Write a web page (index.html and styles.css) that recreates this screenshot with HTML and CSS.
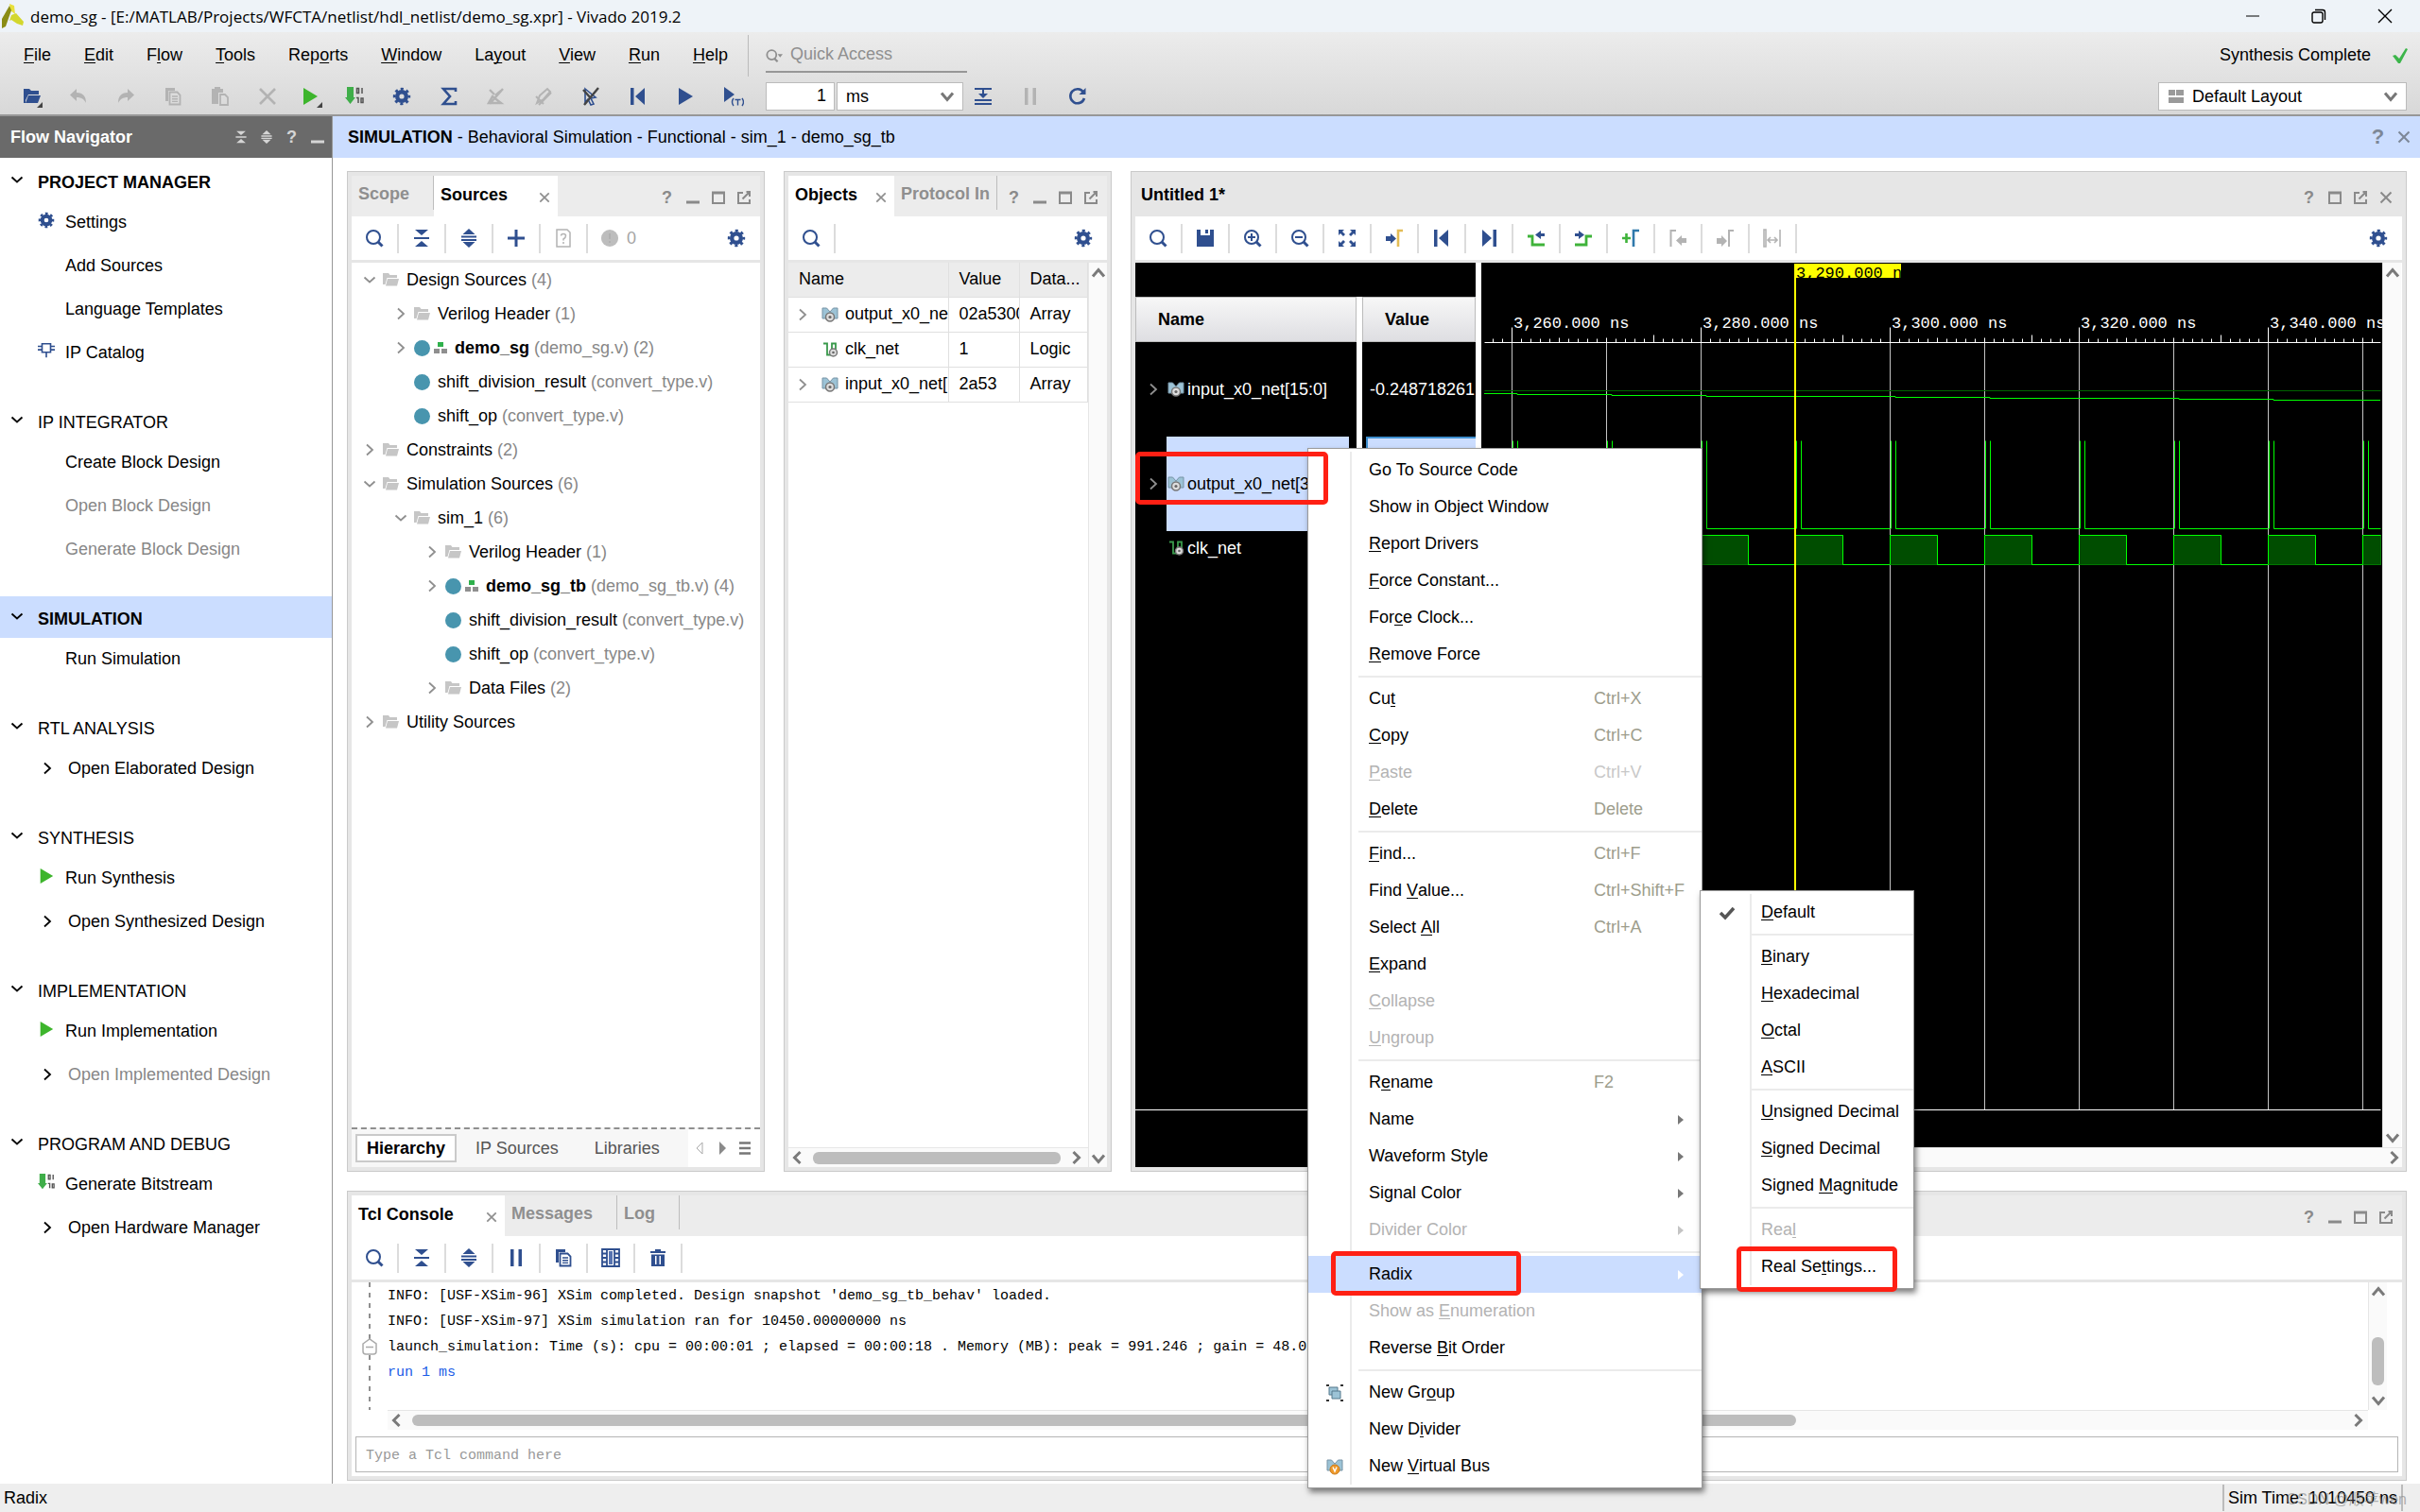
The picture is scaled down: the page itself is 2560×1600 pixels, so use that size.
FILE: index.html
```html
<!DOCTYPE html>
<html lang="en">
  <head>
    <meta charset="UTF-8" />
    <meta name="viewport" content="width=device-width, initial-scale=1.0" />
    <title>demo_sg - Vivado 2019.2</title>
    <link rel="stylesheet" href="styles.css">
  </head>
  <body>
    <svg class="sprite" aria-hidden="true">
      <symbol id="gear" viewBox="0 0 20 20"><g fill="none" stroke="currentColor"><circle cx="10" cy="10" r="4.8" stroke-width="4.4"/><circle cx="10" cy="10" r="7.9" stroke-width="2.6" stroke-dasharray="3.1 3.1" stroke-dashoffset="1.5"/></g></symbol>
      <symbol id="search" viewBox="0 0 20 20"><circle cx="9" cy="9" r="7" fill="none" stroke="currentColor" stroke-width="2"/><path d="M14 14l4.500 4.500" stroke="currentColor" stroke-width="3"/></symbol>
      <symbol id="zoomin" viewBox="0 0 20 20"><circle cx="9" cy="9" r="7" fill="none" stroke="currentColor" stroke-width="2"/><path d="M14 14l4.500 4.500" stroke="currentColor" stroke-width="3"/><path d="M5 9h8M9 5v8" stroke="currentColor" stroke-width="2"/></symbol>
      <symbol id="zoomout" viewBox="0 0 20 20"><circle cx="9" cy="9" r="7" fill="none" stroke="currentColor" stroke-width="2"/><path d="M14 14l4.500 4.500" stroke="currentColor" stroke-width="3"/><path d="M5 9h8" stroke="currentColor" stroke-width="2"/></symbol>
      <symbol id="collapse" viewBox="0 0 20 20"><path d="M3 1h14l-7 6zM3 19h14l-7-6zM2 9h16v2H2z" fill="currentColor"/></symbol>
      <symbol id="expand" viewBox="0 0 20 20"><path d="M3.500 6h13L10 0zM3.500 14h13L10 20zM2 7.500h16v2H2zM2 11h16v2H2z" fill="currentColor"/></symbol>
      <symbol id="plus" viewBox="0 0 20 20"><path d="M10 1v18M1 10h18" stroke="currentColor" stroke-width="3"/></symbol>
      <symbol id="down" viewBox="0 0 14 14"><path d="M1.500 4.500L7 9.500l5.500-5" fill="none" stroke="currentColor" stroke-width="1.800"/></symbol>
      <symbol id="right" viewBox="0 0 14 14"><path d="M4 1.500L10 7l-6 5.500" fill="none" stroke="currentColor" stroke-width="1.800"/></symbol>
      <symbol id="sb-up" viewBox="0 0 16 16"><path d="M2 11.500l6-7 6 7" fill="none" stroke="currentColor" stroke-width="3"/></symbol>
      <symbol id="sb-down" viewBox="0 0 16 16"><path d="M2 4.500l6 7 6-7" fill="none" stroke="currentColor" stroke-width="3"/></symbol>
      <symbol id="sb-left" viewBox="0 0 16 16"><path d="M11.500 2l-6 6 6 6" fill="none" stroke="currentColor" stroke-width="3"/></symbol>
      <symbol id="sb-right" viewBox="0 0 16 16"><path d="M4.500 2l6 6-6 6" fill="none" stroke="currentColor" stroke-width="3"/></symbol>
      <symbol id="close" viewBox="0 0 14 14"><path d="M1.500 1.500l11 11M12.500 1.500l-11 11" stroke="currentColor" stroke-width="2"/></symbol>
      <symbol id="min" viewBox="0 0 14 14"><path d="M0 12h14" stroke="currentColor" stroke-width="3"/></symbol>
      <symbol id="max" viewBox="0 0 14 14"><rect x="1" y="2" width="12" height="11" fill="none" stroke="currentColor" stroke-width="2"/><path d="M0 2h14" stroke="currentColor" stroke-width="3"/></symbol>
      <symbol id="pop" viewBox="0 0 14 14"><path d="M6 2H1v11h12V9M13 6V1H9.500M5.500 8.500L12 2" fill="none" stroke="currentColor" stroke-width="2"/></symbol>
      <symbol id="folder" viewBox="0 0 17 16"><path d="M0 1h6l1.500 2H15v3H4.500L2.500 13H0z" fill="#c6c6c6"/><path d="M5 7h12l-2 7.500H3z" fill="#c6c6c6"/></symbol>
      <symbol id="hier" viewBox="0 0 14 14"><path d="M4 1h6v5H4z" fill="#2fb14c"/><path d="M0 8h6v5H0zM8 8h6v5H8z" fill="#8f8f8f"/></symbol>
      <symbol id="play" viewBox="0 0 20 20"><path d="M3 1l15 9-15 9z" fill="currentColor"/></symbol>
      <symbol id="bits" viewBox="0 0 20 20"><path d="M2 0h7v11h2l-5.500 7L0 11h2z" fill="#3fae49"/><path d="M12.500 1.500h2v5h-2zM18 1v6M12 11.500h2v5.500M17 12h2v4.500h-2z" fill="none" stroke="#555" stroke-width="1.500"/></symbol>
      <symbol id="chip" viewBox="0 0 20 20"><path d="M5 2h10v10H5zM0 5h5M0 9h5M15 5h5M15 9h5M10 12v6" fill="none" stroke="currentColor" stroke-width="1.800"/></symbol>
      <symbol id="bus" viewBox="0 0 18 16"><path d="M1 1h4.500L9 5l3.500-4H17v11H1z" fill="#9cc3d6" stroke="#7793a5"/><circle cx="9" cy="10.500" r="4.500" fill="#ddd" stroke="#777" stroke-width="1.500"/><circle cx="9" cy="10.500" r="1.600" fill="#666"/></symbol>
      <symbol id="wire" viewBox="0 0 18 16"><path d="M2 1.500h4v12h5v-12h4V9" fill="none" stroke="#3a9a4c" stroke-width="1.800"/><circle cx="12.500" cy="11" r="4" fill="#ddd" stroke="#777" stroke-width="1.500"/><circle cx="12.500" cy="11" r="1.300" fill="#666"/></symbol>
      <symbol id="copy" viewBox="0 0 20 20"><path d="M2 1h10v3H5v11H2z" fill="currentColor"/><path d="M6.500 5.500h8l3 3v10h-11z" fill="none" stroke="currentColor" stroke-width="1.800"/><path d="M9 10h6M9 12.700h6M9 15.400h6" stroke="currentColor" stroke-width="1.400"/></symbol>
      <symbol id="first" viewBox="0 0 20 20"><path d="M2 1h3.500v18H2zM17 1v18L7 10z" fill="currentColor"/></symbol>
      <symbol id="last" viewBox="0 0 20 20"><path d="M18 1h-3.500v18H18zM3 1v18l10-9z" fill="currentColor"/></symbol>
      <symbol id="pause" viewBox="0 0 20 20"><path d="M4 1h3.500v18H4zM12.500 1H16v18h-3.500z" fill="currentColor"/></symbol>
      <symbol id="undo" viewBox="0 0 20 20"><path d="M8 2v4c7 0 10 4 10 11-2-4-5-6-10-6v4L1 8.500z" fill="currentColor"/></symbol>
      <symbol id="redo" viewBox="0 0 20 20"><path d="M12 2v4C5 6 2 10 2 17c2-4 5-6 10-6v4l7-6.500z" fill="currentColor"/></symbol>
    </svg>

    <header class="titlebar">
      <svg class="logo" viewBox="0 0 26 26"><path d="M10 0l5 2 1 9-5-4z" fill="#e8e03a"/><path d="M10 2l2 5L6 24l-4 2V16z" fill="#8a8c14"/><path d="M12 12l5-2 8 9-1 4-6-2-6-4-2 1z" fill="#d3d72e"/></svg>
      <h1>demo_sg - [E:/MATLAB/Projects/WFCTA/netlist/hdl_netlist/demo_sg.xpr] - Vivado 2019.2</h1>
      <div class="window-buttons">
        <button aria-label="Minimize"><svg class="i16" viewBox="0 0 16 16"><path d="M1 8h14" stroke="#000"/></svg></button>
        <button aria-label="Restore"><svg class="i16" viewBox="0 0 16 16"><rect x="1" y="4" width="11" height="11" rx="2" fill="none" stroke="#000" stroke-width="1.400"/><path d="M4 1.500h8a2.500 2.500 0 0 1 2.500 2.500v8" fill="none" stroke="#000" stroke-width="1.400"/></svg></button>
        <button aria-label="Close"><svg class="i16" viewBox="0 0 16 16"><path d="M1 1l14 14M15 1L1 15" stroke="#000" stroke-width="1.400"/></svg></button>
      </div>
    </header>

    <div class="header">
      <nav class="menubar">
        <button><u>F</u>ile</button><button><u>E</u>dit</button><button>F<u>l</u>ow</button><button><u>T</u>ools</button><button>Rep<u>o</u>rts</button><button><u>W</u>indow</button><button>La<u>y</u>out</button><button><u>V</u>iew</button><button><u>R</u>un</button><button><u>H</u>elp</button>
        <label class="quick"><svg class="i18" viewBox="0 0 20 20"><circle cx="7" cy="9" r="5.500" fill="none" stroke="#8f8f8f" stroke-width="2"/><path d="M10 13l4 4" stroke="#8f8f8f" stroke-width="2.500"/><path d="M14 8h6l-3 4z" fill="#8f8f8f"/></svg><input type="text" placeholder="Quick Access" aria-label="Quick Access" /></label>
        <div class="status">Synthesis Complete
          <svg class="i18" viewBox="0 0 18 18"><path d="M1 9l3-1 4 4L15 1l2 1-8 15H7z" fill="#3cb54a"/></svg>
        </div>
      </nav>
      <div class="main-tools">
        <button aria-label="Open"><svg class="i24" viewBox="0 0 24 24"><path d="M4 4h6l2 2h8v4H9l-3 6v3H4z" fill="#2f4f8f"/><path d="M9 11h13l-3 8H6z" fill="#2f4f8f"/><path d="M24 18v6h-6z" fill="#444"/></svg></button>
        <button class="off" aria-label="Undo"><svg class="i20"><use href="#undo"/></svg></button>
        <button class="off" aria-label="Redo"><svg class="i20"><use href="#redo"/></svg></button>
        <button class="off" aria-label="Copy"><svg class="i20"><use href="#copy"/></svg></button>
        <button class="off" aria-label="Paste"><svg class="i20" viewBox="0 0 20 20"><path d="M1 2h3V0h6v2h3v4H8v12H1z" fill="currentColor"/><path d="M10 8h5l3 3v8h-8z" fill="none" stroke="currentColor" stroke-width="1.800"/></svg></button>
        <button class="off" aria-label="Delete"><svg class="i20" viewBox="0 0 20 20"><path d="M2 2l16 16M18 2L2 18" stroke="currentColor" stroke-width="2.600"/></svg></button>
        <button class="go" aria-label="Run"><svg class="i24" viewBox="0 0 24 24"><path d="M4 3l15 9-15 9z" fill="#3db52c"/><path d="M24 18v6h-6z" fill="#444"/></svg></button>
        <button aria-label="Generate Bitstream"><svg class="i20"><use href="#bits"/></svg></button>
        <button aria-label="Settings"><svg class="i20"><use href="#gear"/></svg></button>
        <button aria-label="Report"><svg class="i20" viewBox="0 0 20 20"><path d="M17 5V2H4l7 8-7 8h13v-3" fill="none" stroke="currentColor" stroke-width="2.600"/></svg></button>
        <button class="off" aria-label="Timing"><svg class="i20" viewBox="0 0 20 20"><path d="M2 17h13l-9-7zM3 3l5 5M17 2L3 18M9 9l6-5" fill="none" stroke="currentColor" stroke-width="2.400"/></svg></button>
        <button class="off" aria-label="Edit"><svg class="i20" viewBox="0 0 20 20"><path d="M3 17l3-8 8-7 3 3-7 8zM18 6L5 19M2 10l8 8" fill="none" stroke="currentColor" stroke-width="2"/></svg></button>
        <button aria-label="Deselect"><svg class="i20" viewBox="0 0 20 20"><path d="M4 2l11 9-5 1 3 6-3 1-3-6-3 3z" fill="none" stroke="#2f4f8f" stroke-width="1.600"/><path d="M18 1L3 19M2 3l8 9" stroke="#444" stroke-width="2.400"/></svg></button>
        <button aria-label="Restart"><svg class="i20"><use href="#first"/></svg></button>
        <button aria-label="Run All"><svg class="i20"><use href="#play"/></svg></button>
        <button aria-label="Run for"><svg class="i24" viewBox="0 0 24 24"><path d="M3 2l11 8-11 8z" fill="currentColor"/><path d="M13 14q-3 4 0 8M22 14q3 4 0 8M14.500 15.500h6M17.500 15.500v6" fill="none" stroke="currentColor" stroke-width="1.400"/></svg></button>
        <input class="time" type="text" value="1" aria-label="Run time" />
        <div class="select unit"><select aria-label="Time unit"><option>ms</option></select><svg class="i16"><use href="#sb-down"/></svg></div>
        <button class="step" aria-label="Step"><svg class="i20" viewBox="0 0 20 20"><path d="M1 2h18M1 14h18M1 18h18M10 3v5" stroke="currentColor" stroke-width="2"/><path d="M5 7h10l-5 5z" fill="currentColor"/></svg></button>
        <button class="off" aria-label="Break"><svg class="i20"><use href="#pause"/></svg></button>
        <button aria-label="Relaunch"><svg class="i20" viewBox="0 0 20 20"><path d="M16 5.500A7.500 7.500 0 1 0 17 12" fill="none" stroke="currentColor" stroke-width="2.600"/><path d="M18.500 1v7h-7z" fill="currentColor"/></svg></button>
        <div class="select layout"><svg class="i16 grid-icon" viewBox="0 0 16 16"><path d="M0 1h7v6H0zM8 1h8v6H8zM0 9h16v6H0z" fill="#9a9a9a"/></svg><select aria-label="Layout"><option>Default Layout</option></select><svg class="i16"><use href="#sb-down"/></svg></div>
      </div>
    </div>

    <main class="main">
      <aside class="nav">
        <div class="nav-title">
          <h2>Flow Navigator</h2>
          <button aria-label="Collapse all"><svg class="i14"><use href="#collapse"/></svg></button>
          <button aria-label="Expand all"><svg class="i14"><use href="#expand"/></svg></button>
          <button class="help">?</button>
          <button aria-label="Minimize"><svg class="i14"><use href="#min"/></svg></button>
        </div>
        <section>
          <h3 class="bold"><svg class="i14"><use href="#down"/></svg>PROJECT MANAGER</h3>
          <ul>
            <li><svg class="i18 blue"><use href="#gear"/></svg><a href="#">Settings</a></li>
            <li><a href="#">Add Sources</a></li>
            <li><a href="#">Language Templates</a></li>
            <li><svg class="i18 blue"><use href="#chip"/></svg><a href="#">IP Catalog</a></li>
          </ul>
        </section>
        <section>
          <h3><svg class="i14"><use href="#down"/></svg>IP INTEGRATOR</h3>
          <ul>
            <li><a href="#">Create Block Design</a></li>
            <li class="off"><a href="#">Open Block Design</a></li>
            <li class="off"><a href="#">Generate Block Design</a></li>
          </ul>
        </section>
        <section>
          <h3 class="bold selected"><svg class="i14"><use href="#down"/></svg>SIMULATION</h3>
          <ul>
            <li><a href="#">Run Simulation</a></li>
          </ul>
        </section>
        <section>
          <h3><svg class="i14"><use href="#down"/></svg>RTL ANALYSIS</h3>
          <ul>
            <li class="more"><svg class="i14"><use href="#right"/></svg><a href="#">Open Elaborated Design</a></li>
          </ul>
        </section>
        <section>
          <h3><svg class="i14"><use href="#down"/></svg>SYNTHESIS</h3>
          <ul>
            <li><svg class="i18 green"><use href="#play"/></svg><a href="#">Run Synthesis</a></li>
            <li class="more"><svg class="i14"><use href="#right"/></svg><a href="#">Open Synthesized Design</a></li>
          </ul>
        </section>
        <section>
          <h3><svg class="i14"><use href="#down"/></svg>IMPLEMENTATION</h3>
          <ul>
            <li><svg class="i18 green"><use href="#play"/></svg><a href="#">Run Implementation</a></li>
            <li class="more off"><svg class="i14"><use href="#right"/></svg><a href="#">Open Implemented Design</a></li>
          </ul>
        </section>
        <section>
          <h3><svg class="i14"><use href="#down"/></svg>PROGRAM AND DEBUG</h3>
          <ul>
            <li><svg class="i18"><use href="#bits"/></svg><a href="#">Generate Bitstream</a></li>
            <li class="more"><svg class="i14"><use href="#right"/></svg><a href="#">Open Hardware Manager</a></li>
          </ul>
        </section>
      </aside>

      <div class="workspace">
        <div class="sim-title">
          <h2><b>SIMULATION</b> - Behavioral Simulation - Functional - sim_1 - demo_sg_tb</h2>
          <button class="help">?</button>
          <button aria-label="Close"><svg class="i14"><use href="#close"/></svg></button>
        </div>

        <div class="panels">
          <div class="top-row">
            <div class="panel sources">
              <div class="tabs">
                <button class="tab scope">Scope</button>
                <button class="tab active src-tab">Sources <svg class="i12"><use href="#close"/></svg></button>
                <div class="controls">
                  <button class="help">?</button>
                  <button aria-label="Minimize"><svg class="i14"><use href="#min"/></svg></button>
                  <button aria-label="Maximize"><svg class="i14"><use href="#max"/></svg></button>
                  <button aria-label="Float"><svg class="i14"><use href="#pop"/></svg></button>
                </div>
              </div>
              <div class="tools">
                <button aria-label="Search"><svg class="i20"><use href="#search"/></svg></button>
                <button aria-label="Collapse all"><svg class="i20"><use href="#collapse"/></svg></button>
                <button aria-label="Expand all"><svg class="i20"><use href="#expand"/></svg></button>
                <button aria-label="Add sources"><svg class="i20"><use href="#plus"/></svg></button>
                <button class="off" aria-label="Properties"><svg class="i20" viewBox="0 0 20 20"><path d="M3 1h11l3 3v15H3z" fill="none" stroke="currentColor" stroke-width="1.500"/><path d="M7.500 7.500q0-2 2.500-2t2.500 2-2.500 3.500v1.500M10 14v2" fill="none" stroke="currentColor" stroke-width="1.500"/></svg></button>
                <span class="count"><svg class="i18" viewBox="0 0 18 18"><circle cx="9" cy="9" r="9" fill="#bdbdbd"/><path d="M9 4v6M9 12v2" stroke="#b0b0b0" stroke-width="2"/></svg>0</span>
                <button class="gear" aria-label="Settings"><svg class="i20"><use href="#gear"/></svg></button>
              </div>
              <ul class="tree">
                <li><svg class="i14"><use href="#down"/></svg><svg class="fold"><use href="#folder"/></svg>Design Sources <i>(4)</i></li>
                <li class="l1"><svg class="i14"><use href="#right"/></svg><svg class="fold"><use href="#folder"/></svg>Verilog Header <i>(1)</i></li>
                <li class="l1"><svg class="i14"><use href="#right"/></svg><span class="dot"></span><svg class="hier"><use href="#hier"/></svg><b>demo_sg </b><i>(demo_sg.v) (2)</i></li>
                <li class="l1 leaf"><span class="dot"></span>shift_division_result <i>(convert_type.v)</i></li>
                <li class="l1 leaf"><span class="dot"></span>shift_op <i>(convert_type.v)</i></li>
                <li><svg class="i14"><use href="#right"/></svg><svg class="fold"><use href="#folder"/></svg>Constraints <i>(2)</i></li>
                <li><svg class="i14"><use href="#down"/></svg><svg class="fold"><use href="#folder"/></svg>Simulation Sources <i>(6)</i></li>
                <li class="l1"><svg class="i14"><use href="#down"/></svg><svg class="fold"><use href="#folder"/></svg>sim_1 <i>(6)</i></li>
                <li class="l2"><svg class="i14"><use href="#right"/></svg><svg class="fold"><use href="#folder"/></svg>Verilog Header <i>(1)</i></li>
                <li class="l2"><svg class="i14"><use href="#right"/></svg><span class="dot"></span><svg class="hier"><use href="#hier"/></svg><b>demo_sg_tb </b><i>(demo_sg_tb.v) (4)</i></li>
                <li class="l2 leaf"><span class="dot"></span>shift_division_result <i>(convert_type.v)</i></li>
                <li class="l2 leaf"><span class="dot"></span>shift_op <i>(convert_type.v)</i></li>
                <li class="l2"><svg class="i14"><use href="#right"/></svg><svg class="fold"><use href="#folder"/></svg>Data Files <i>(2)</i></li>
                <li><svg class="i14"><use href="#right"/></svg><svg class="fold"><use href="#folder"/></svg>Utility Sources</li>
              </ul>
              <div class="bottom-tabs">
                <button class="active">Hierarchy</button>
                <button>IP Sources</button>
                <button>Libraries</button>
                <div class="pager">
                  <button aria-label="Previous"><svg class="i14" viewBox="0 0 14 14"><path d="M10 1v12L4 7z" fill="none" stroke="#aaa"/></svg></button>
                  <button aria-label="Next"><svg class="i14" viewBox="0 0 14 14"><path d="M4 0v14l7-7z" fill="#8a8a8a"/></svg></button>
                  <button aria-label="List"><svg class="i14" viewBox="0 0 14 14"><path d="M1 1.500h12M1 7h12M1 12.500h12" stroke="#777" stroke-width="2.500"/></svg></button>
                </div>
              </div>
            </div>

            <div class="panel objects">
              <div class="tabs">
                <button class="tab active obj-tab">Objects <svg class="i12"><use href="#close"/></svg></button>
                <button class="tab protocol"><span>Protocol In</span></button>
                <div class="controls">
                  <button class="help">?</button>
                  <button aria-label="Minimize"><svg class="i14"><use href="#min"/></svg></button>
                  <button aria-label="Maximize"><svg class="i14"><use href="#max"/></svg></button>
                  <button aria-label="Float"><svg class="i14"><use href="#pop"/></svg></button>
                </div>
              </div>
              <div class="tools">
                <button aria-label="Search"><svg class="i20"><use href="#search"/></svg></button>
                <button class="gear" aria-label="Settings"><svg class="i20"><use href="#gear"/></svg></button>
              </div>
              <div class="objects-body">
                <div class="objects-list">
                  <table>
                    <thead><tr><th>Name</th><th>Value</th><th>Data...</th></tr></thead>
                    <tbody>
                      <tr><td><svg class="i14"><use href="#right"/></svg><svg class="net"><use href="#bus"/></svg>output_x0_net</td><td>02a5300</td><td>Array</td></tr>
                      <tr><td><svg class="i14"></svg><svg class="net"><use href="#wire"/></svg>clk_net</td><td>1</td><td>Logic</td></tr>
                      <tr><td><svg class="i14"><use href="#right"/></svg><svg class="net"><use href="#bus"/></svg>input_x0_net[</td><td>2a53</td><td>Array</td></tr>
                    </tbody>
                  </table>
                  <div class="hscroll"><svg class="i16"><use href="#sb-left"/></svg><span class="thumb"></span><svg class="i16"><use href="#sb-right"/></svg></div>
                </div>
                <div class="vscroll"><svg class="i16"><use href="#sb-up"/></svg><svg class="i16"><use href="#sb-down"/></svg></div>
              </div>
            </div>

            <div class="panel wave">
              <div class="tabs">
                <h2>Untitled 1*</h2>
                <div class="controls">
                  <button class="help">?</button>
                  <button aria-label="Maximize"><svg class="i14"><use href="#max"/></svg></button>
                  <button aria-label="Float"><svg class="i14"><use href="#pop"/></svg></button>
                  <button aria-label="Close"><svg class="i14"><use href="#close"/></svg></button>
                </div>
              </div>
              <div class="tools">
                <button aria-label="Search"><svg class="i20"><use href="#search"/></svg></button>
                <button aria-label="Save"><svg class="i20" viewBox="0 0 20 20"><path d="M1 1h4v6h10V1h4v18H1zM10 1h3v4h-3z" fill="currentColor"/></svg></button>
                <button aria-label="Zoom in"><svg class="i20"><use href="#zoomin"/></svg></button>
                <button aria-label="Zoom out"><svg class="i20"><use href="#zoomout"/></svg></button>
                <button aria-label="Zoom fit"><svg class="i20" viewBox="0 0 20 20"><path d="M1 1h6L5 3l3 3-2 2-3-3-2 2zM19 1h-6l2 2-3 3 2 2 3-3 2 2zM1 19h6l-2-2 3-3-2-2-3 3-2-2zM19 19h-6l2-2-3-3 2-2 3 3 2-2z" fill="currentColor"/></svg></button>
                <button aria-label="Go to cursor"><svg class="i20" viewBox="0 0 20 20"><path d="M1 8h5V5l6 5.500L6 16v-3H1z" fill="currentColor"/><path d="M14 19V2h5" fill="none" stroke="#e3bc55" stroke-width="2.600"/></svg></button>
                <button aria-label="Go to start"><svg class="i20"><use href="#first"/></svg></button>
                <button aria-label="Go to end"><svg class="i20"><use href="#last"/></svg></button>
                <button aria-label="Previous transition"><svg class="i20" viewBox="0 0 20 20"><path d="M1 8h5v9h13" fill="none" stroke="#3fb33a" stroke-width="2.800"/><path d="M19 5h-4V2L9 6.500l6 4.500V8h4z" fill="currentColor"/></svg></button>
                <button aria-label="Next transition"><svg class="i20" viewBox="0 0 20 20"><path d="M1 17h12V8h6" fill="none" stroke="#3fb33a" stroke-width="2.800"/><path d="M1 5h4V2l6 4.500L5 11V8H1z" fill="currentColor"/></svg></button>
                <button aria-label="Add marker"><svg class="i20" viewBox="0 0 20 20"><path d="M1 10h9M5.500 5v10" stroke="#3fb33a" stroke-width="2.600"/><path d="M13 19V2h6" fill="none" stroke="#2f79ab" stroke-width="2.600"/></svg></button>
                <button class="off" aria-label="Previous marker"><svg class="i20" viewBox="0 0 20 20"><path d="M2.500 19V2H8" fill="none" stroke="currentColor" stroke-width="2"/><path d="M19 10h-5V7l-6 5.500 6 5.500v-3h5z" fill="currentColor"/></svg></button>
                <button class="off" aria-label="Next marker"><svg class="i20" viewBox="0 0 20 20"><path d="M1 10h5V7l6 6-6 6v-3H1z" fill="currentColor"/><path d="M14 19V2h5" fill="none" stroke="currentColor" stroke-width="2"/></svg></button>
                <button class="off" aria-label="Swap cursors"><svg class="i20" viewBox="0 0 20 20"><path d="M1 1h2v18H1zM18 1v18M5 12h10M8 9l-3 3 3 3M12 9l3 3-3 3" fill="none" stroke="currentColor" stroke-width="1.600"/></svg></button>
                <button class="gear" aria-label="Settings"><svg class="i20"><use href="#gear"/></svg></button>
              </div>
              <div class="wave-body">
                <div class="signals">
                  <div class="signal-cols">
                    <div class="names">
                      <div class="col-head">Name</div>
                      <div class="sig"><svg class="i14"><use href="#right"/></svg><span><svg class="net"><use href="#bus"/></svg>input_x0_net[15:0]</span></div>
                      <div class="sig picked"><svg class="i14"><use href="#right"/></svg><span><svg class="net"><use href="#bus"/></svg>output_x0_net[31:0]</span></div>
                      <div class="sig short"><svg class="i14"></svg><span><svg class="net"><use href="#wire"/></svg>clk_net</span></div>
                      <div class="foot"></div>
                    </div>
                    <div class="values">
                      <div class="col-head">Value</div>
                      <div class="sig">-0.248718261</div>
                      <div class="sig picked"></div>
                      <div class="foot"></div>
                    </div>
                  </div>
                </div>
                <div class="plot-area">
                  <svg id="plot" class="plot"></svg>
                  <div class="vscroll"><svg class="i16"><use href="#sb-up"/></svg><svg class="i16"><use href="#sb-down"/></svg></div>
                  <div class="hscroll"><svg class="i16"><use href="#sb-right"/></svg></div>
                </div>
              </div>
            </div>
          </div>

          <div class="panel console">
            <div class="tabs">
              <button class="tab active tcl-tab">Tcl Console <svg class="i12"><use href="#close"/></svg></button>
              <button class="tab messages">Messages</button>
              <button class="tab log">Log</button>
              <div class="controls">
                <button class="help">?</button>
                <button aria-label="Minimize"><svg class="i14"><use href="#min"/></svg></button>
                <button aria-label="Maximize"><svg class="i14"><use href="#max"/></svg></button>
                <button aria-label="Float"><svg class="i14"><use href="#pop"/></svg></button>
              </div>
            </div>
            <div class="tools">
              <button aria-label="Search"><svg class="i20"><use href="#search"/></svg></button>
              <button aria-label="Collapse all"><svg class="i20"><use href="#collapse"/></svg></button>
              <button aria-label="Expand all"><svg class="i20"><use href="#expand"/></svg></button>
              <button aria-label="Pause"><svg class="i20"><use href="#pause"/></svg></button>
              <button aria-label="Copy"><svg class="i20"><use href="#copy"/></svg></button>
              <button aria-label="Columns"><svg class="i20" viewBox="0 0 20 20"><path d="M1 1h18v18H1zM6 1v18M14 1v18M1 5.500h5M1 10h5M1 14.500h5M14 5.500h5M14 10h5M14 14.500h5" fill="none" stroke="currentColor" stroke-width="1.800"/><path d="M8 3h4v14H8z" fill="#5673b0"/></svg></button>
              <button aria-label="Clear"><svg class="i20" viewBox="0 0 20 20"><path d="M2 3h5V1h6v2h5v2H2zM3 6.500h14V19H3zM7 8v9h1.500V8zM11.500 8v9H13V8z" fill="currentColor" fill-rule="evenodd"/></svg></button>
            </div>
            <div class="console-body">
              <div class="fold-gutter"><svg viewBox="0 0 16 18"><path d="M1 6l7-5 7 5v8q0 3-3 3H4q-3 0-3-3z" fill="#fff" stroke="#aaa" stroke-width="1.500"/><path d="M4 9.500h8" stroke="#aaa" stroke-width="1.500"/></svg></div>
              <div class="log-area">
                <pre>INFO: [USF-XSim-96] XSim completed. Design snapshot 'demo_sg_tb_behav' loaded.
INFO: [USF-XSim-97] XSim simulation ran for 10450.00000000 ns
launch_simulation: Time (s): cpu = 00:00:01 ; elapsed = 00:00:18 . Memory (MB): peak = 991.246 ; gain = 48.020
<span>run 1 ms</span></pre>
                <div class="hscroll"><svg class="i16"><use href="#sb-left"/></svg><span class="thumb"></span><svg class="i16"><use href="#sb-right"/></svg></div>
              </div>
              <div class="vscroll"><svg class="i16"><use href="#sb-up"/></svg><span class="thumb"></span><svg class="i16"><use href="#sb-down"/></svg></div>
            </div>
            <input class="command" type="text" placeholder="Type a Tcl command here" aria-label="Tcl command" />
          </div>
        </div>
      </div>
    </main>

    <footer class="statusbar">
      <span>Radix</span>
      <span class="simtime">Sim Time: 1010450 ns</span>
      <span class="mark">CSDN @顺苹wen</span>
    </footer>

    <div class="menu context">
      <button>Go To Source Code</button>
      <button>Show in Object Window</button>
      <button><u>R</u>eport Drivers</button>
      <button><u>F</u>orce Constant...</button>
      <button>For<u>c</u>e Clock...</button>
      <button><u>R</u>emove Force</button>
      <hr>
      <button>Cu<u>t</u><kbd>Ctrl+X</kbd></button>
      <button><u>C</u>opy<kbd>Ctrl+C</kbd></button>
      <button disabled><u>P</u>aste<kbd>Ctrl+V</kbd></button>
      <button><u>D</u>elete<kbd>Delete</kbd></button>
      <hr>
      <button><u>F</u>ind...<kbd>Ctrl+F</kbd></button>
      <button>Find <u>V</u>alue...<kbd>Ctrl+Shift+F</kbd></button>
      <button>Select <u>A</u>ll<kbd>Ctrl+A</kbd></button>
      <button><u>E</u>xpand</button>
      <button disabled><u>C</u>ollapse</button>
      <button disabled><u>U</u>ngroup</button>
      <hr>
      <button>R<u>e</u>name<kbd>F2</kbd></button>
      <button class="sub">Name</button>
      <button class="sub">Waveform Style</button>
      <button class="sub">Signal Color</button>
      <button class="sub" disabled>Divider Color</button>
      <hr>
      <button class="sub hover">Radix</button>
      <button disabled>Show as <u>E</u>numeration</button>
      <button>Reverse <u>B</u>it Order</button>
      <hr>
      <button><svg class="icon" viewBox="0 0 18 18"><path d="M3 3h9v8H3z" fill="#9cc3d6" stroke="#55788c"/><path d="M6 7h9v8H6z" fill="#9cc3d6" stroke="#55788c"/><path d="M0 0h3v2H0zM15 0h3v2h-3zM0 16h3v2H0zM15 16h3v2h-3z" fill="#333"/></svg>New Gr<u>o</u>up</button>
      <button>New D<u>i</u>vider</button>
      <button><svg class="icon" viewBox="0 0 18 18"><path d="M1 2h4.500L9 6l3.500-4H17v11H1z" fill="#9cc3d6" stroke="#7793a5"/><circle cx="9" cy="12" r="5" fill="#f09a2a" stroke="#c97a1a"/><path d="M7 9.500l2 4.500 2-4.500" fill="none" stroke="#fff" stroke-width="1.400"/></svg>New <u>V</u>irtual Bus</button>
    </div>

    <div class="menu radix">
      <button><svg class="icon" viewBox="0 0 18 18"><path d="M2 9l5 5 9-10" fill="none" stroke="#555" stroke-width="3.500"/></svg><u>D</u>efault</button>
      <hr>
      <button><u>B</u>inary</button>
      <button><u>H</u>exadecimal</button>
      <button><u>O</u>ctal</button>
      <button><u>A</u>SCII</button>
      <hr>
      <button><u>U</u>nsigned Decimal</button>
      <button><u>S</u>igned Decimal</button>
      <button>Signed <u>M</u>agnitude</button>
      <hr>
      <button disabled>Rea<u>l</u></button>
      <button>Real Se<u>t</u>tings...</button>
    </div>

    <div class="callout c1"></div>
    <div class="callout c2"></div>
    <div class="callout c3"></div>

    <script src="wave.js"></script>
  </body>
</html>
```
FILE: wave.js
```js
const plot = document.getElementById("plot");
const width = plot.clientWidth;
const height = plot.clientHeight;
const right = width - 2;
const left = 3;
const rulerY = 84;
const firstMajor = 32;
const step = 100; // 10 ns
const bottom = height - 40;

let svg = "";

function line(x1, y1, x2, y2, cls) {
  svg += `<path class="${cls}" d="M${x1 + 0.5} ${y1 + 0.5}L${x2 + 0.5} ${y2 + 0.5}"/>`;
}

// grid
for (let x = firstMajor; x < right; x += step) {
  line(x, rulerY, x, bottom, "grid");
}

// ruler
line(left, rulerY, right, rulerY, "ruler");
for (let x = firstMajor - 20; x < right; x += 10) {
  const pos = (x - firstMajor + 200) % 200;
  let h = 4;
  if (pos === 0) h = 16;
  else if (pos === 150) h = 8;
  else if (pos % 50 === 0) h = 5;
  line(x, rulerY - h, x, rulerY, "tick");
}
for (let x = firstMajor, t = 260; x < right; x += 200, t += 20) {
  svg += `<text class="label" x="${x + 2}" y="69">3,${t}.000 ns</text>`;
}

// input_x0_net
line(left, 135, right, 135, "dim");
const steps = [38, 138, 238, 438, 538, 738, 838];
let d = `M${left} 138.5`;
let y = 138.5;
steps.forEach((x) => {
  d += `H${x}V${++y}`;
});
svg += `<path class="signal" d="${d}H${right}"/>`;

// output_x0_net and clk_net
for (let x = firstMajor; x < right; x += step) {
  const low = Math.min(x + 6, right);
  const end = Math.min(x + step, right);
  const high = Math.min(x + 50, right);
  line(x + 1, 188, x + 1, 281, "signal");
  line(low, 188, low, 281, "signal");
  line(low, 281, end, 281, "signal");
  svg += `<rect class="clk" x="${x + 0.5}" y="288.5" width="${high - x}" height="31"/>`;
  line(x, 319, x, 288, "signal");
  line(x, 288, high, 288, "signal");
  if (high < right) {
    line(high, 288, high, 319, "signal");
    line(high, 319, end, 319, "signal");
  }
}

line(left, bottom, right, bottom, "ruler");

// cursor
svg += `<rect class="cursor" x="331" y="1" width="2" height="${bottom}"/>`;
svg += `<svg x="331" y="1" width="113" height="15"><rect class="cursor" width="113" height="15"/><text class="cursor-label" x="2" y="15">3,290.000 n</text></svg>`;

plot.innerHTML = svg;
```
FILE: styles.css
```css
* {
  box-sizing: border-box;
}

body {
  margin: 0;
  height: 100vh;
  display: flex;
  flex-direction: column;
  position: relative;
  overflow: hidden;
  font-family: "Liberation Sans", Arial, sans-serif;
  font-size: 18px;
  color: #000;
  background: #fff;
}

h1,
h2,
h3,
ul,
pre {
  margin: 0;
  padding: 0;
  font-size: 18px;
  font-weight: normal;
}

ul {
  list-style: none;
}

button,
input,
select {
  font: inherit;
  color: inherit;
  border: 0;
  padding: 0;
  margin: 0;
  background: none;
  border-radius: 0;
}

a {
  color: inherit;
  text-decoration: none;
}

u {
  text-underline-offset: 2px;
  text-decoration-thickness: 1px;
  text-decoration-skip-ink: none;
}

svg {
  flex: none;
  display: block;
}

.sprite {
  display: none;
}

.i12 { width: 12px; height: 12px; }
.i14 { width: 14px; height: 14px; }
.i16 { width: 16px; height: 16px; }
.i18 { width: 18px; height: 18px; }
.i20 { width: 20px; height: 20px; }
.i24 { width: 24px; height: 24px; }

.blue { color: #2f4f8f; }
.green { color: #3db52c; }

.help {
  font-weight: bold;
}

/* title bar and menus */
.titlebar {
  height: 34px;
  display: flex;
  align-items: center;
  background: #eef3f8;
}

.logo {
  width: 26px;
  height: 26px;
  margin-right: 6px;
}

.titlebar h1 {
  font-family: "Open Sans", "Noto Sans", sans-serif;
  font-size: 17px;
  flex: 1;
}

.window-buttons {
  display: flex;
  padding-right: 2px;
}

.window-buttons button {
  width: 70px;
  display: flex;
  justify-content: center;
}

.header {
  height: 89px;
  background: linear-gradient(#ececec, #d8d8d8);
  border-bottom: 2px solid #979797;
}

.menubar {
  height: 48px;
  display: flex;
  align-items: center;
  gap: 35px;
  padding: 1px 12px 0 25px;
}

.quick {
  display: flex;
  align-items: center;
  position: relative;
  margin-left: -14px;
  height: 44px;
  padding-left: 18px;
  border-left: 1px solid #bbb;
}

.quick input {
  width: 213px;
  height: 36px;
  padding-left: 26px;
  border-bottom: 2px solid #979797;
}

.quick svg {
  position: absolute;
  left: 18px;
}

.quick input::placeholder {
  color: #8f8f8f;
}

.status {
  display: flex;
  align-items: center;
  gap: 22px;
  margin-left: auto;
}

.main-tools {
  height: 39px;
  display: flex;
  align-items: center;
  padding: 0 14px 0 8px;
  color: #2f4f8f;
}

.main-tools button {
  width: 50px;
  display: flex;
  justify-content: center;
}

.main-tools .go {
  width: 42px;
}

.main-tools .off,
.tools .off {
  color: #b3b3b3;
}

.time {
  width: 73px;
  height: 30px;
  margin-left: 10px;
  padding-right: 8px;
  text-align: right;
  color: #000;
  background: #fff;
  border: 1px solid #bbb;
}

.select {
  position: relative;
  display: flex;
  align-items: center;
  height: 30px;
  background: #fff;
  color: #000;
  border: 1px solid #bbb;
}

.select select {
  appearance: none;
  width: 100%;
  padding-left: 9px;
  height: 28px;
}

.select svg {
  position: absolute;
  right: 8px;
  color: #777;
}

.select .grid-icon {
  left: 10px;
}

.unit {
  width: 134px;
  margin-left: 2px;
}

.main-tools .step {
  width: 42px;
  margin-right: 4px;
}

.layout {
  width: 263px;
  margin-left: auto;
}

.layout select {
  padding-left: 35px;
}

/* flow navigator */
.main {
  flex: 1;
  min-height: 0;
  display: flex;
}

.nav {
  width: 352px;
  border-right: 1px solid #979797;
}

.nav-title {
  height: 44px;
  display: flex;
  align-items: center;
  padding: 0 2px 0 11px;
  margin-bottom: 2px;
  background: #6a6a6a;
  color: #d5d5d5;
}

.nav-title h2 {
  flex: 1;
  font-weight: bold;
  color: #fff;
}

.nav-title button {
  width: 27px;
  display: flex;
  justify-content: center;
}

.nav h3 {
  height: 44px;
  display: flex;
  align-items: center;
  gap: 15px;
  padding: 5px 0 0 11px;
}

.nav h3 svg {
  margin-bottom: 8px;
}

.nav .bold {
  font-weight: bold;
}

.nav .selected {
  background: #cbddff;
}

.nav ul {
  padding: 12px 0 40px 40px;
  display: flex;
  flex-direction: column;
  gap: 26px;
}

.nav li {
  height: 20px;
  display: flex;
  align-items: center;
  gap: 11px;
}

.nav li .i18 {
  margin-bottom: 4px;
}

.nav li > a:first-child {
  padding-left: 29px;
}

.nav .more {
  padding-left: 3px;
  gap: 15px;
}

.nav .off a {
  color: #878787;
}

/* workspace */
.workspace {
  flex: 1;
  min-width: 0;
  display: flex;
  flex-direction: column;
}

.sim-title {
  height: 44px;
  display: flex;
  align-items: center;
  padding: 0 4px 0 16px;
  background: #cbddff;
}

.sim-title h2 {
  flex: 1;
}

.sim-title button {
  width: 27px;
  display: flex;
  justify-content: center;
  color: #7d8797;
}

.sim-title .help {
  font-size: 22px;
}

.panels {
  flex: 1;
  min-height: 0;
  display: flex;
  flex-direction: column;
  gap: 20px;
  padding: 14px 14px 3px 15px;
}

.top-row {
  flex: 1;
  min-height: 0;
  display: flex;
}

.panel {
  display: flex;
  flex-direction: column;
  padding: 4px;
  background: #e6e6e6;
  border: 1px solid #cacaca;
}

.sources {
  width: 442px;
  margin-right: 20px;
}

.objects {
  width: 347px;
  margin-right: 20px;
}

.wave {
  flex: 1;
  min-width: 0;
}

.console {
  height: 307px;
}

.tabs {
  height: 43px;
  display: flex;
  background: #ececec;
}

.tab {
  display: flex;
  align-items: center;
  justify-content: space-between;
  height: 36px;
  padding: 3px 8px 0 7px;
  font-weight: bold;
  color: #8f8f8f;
  border-right: 1px solid #bdbdbd;
  white-space: nowrap;
}

.tab.active {
  height: 43px;
  padding-top: 0;
  padding-bottom: 3px;
  background: #fff;
  color: #000;
  border: 0;
}

.tab svg {
  color: #8f8f8f;
  margin-top: 5px;
}

.scope { width: 87px; }
.src-tab { width: 131px; }
.obj-tab { width: 112px; }
.tcl-tab { width: 162px; }
.messages { width: 119px; }
.log { width: 66px; }

.protocol {
  width: 109px;
  padding-right: 7px;
}

.protocol span {
  overflow: hidden;
}

.controls {
  display: flex;
  align-items: center;
  margin-left: auto;
  padding: 3px 4px 0 0;
}

.controls button {
  width: 27px;
  display: flex;
  justify-content: center;
  color: #8a8a8a;
}

.wave .tabs {
  background: #e6e6e6;
}

.wave h2 {
  font-weight: bold;
  padding: 10px 0 0 6px;
}

.tools {
  height: 49px;
  display: flex;
  align-items: center;
  color: #2f4f8f;
  background: #fff;
  border-bottom: 3px solid #e6e6e6;
}

.tools button {
  width: 50px;
  height: 31px;
  display: flex;
  align-items: center;
  justify-content: center;
  border-right: 2px solid #dcdcdc;
}

.tools .gear {
  border: 0;
  margin-left: auto;
}

.count {
  display: flex;
  align-items: center;
  gap: 9px;
  padding-left: 14px;
  color: #a5a5a5;
}

.tree {
  flex: 1;
  background: #fff;
}

.tree li {
  height: 36px;
  display: flex;
  align-items: center;
  padding-left: 12px;
  white-space: pre;
}

.tree .l1 { padding-left: 45px; }
.tree .l2 { padding-left: 78px; }
.tree .l1.leaf { padding-left: 66px; }
.tree .l2.leaf { padding-left: 99px; }

.tree .i14 {
  color: #8f8f8f;
  margin-right: 7px;
}

.tree i {
  font-style: normal;
  color: #878787;
}

.fold {
  width: 17px;
  height: 16px;
  margin-right: 8px;
}

.dot {
  width: 17px;
  height: 17px;
  margin-right: 8px;
  border-radius: 50%;
  background: #4895ae;
}

.hier {
  width: 14px;
  height: 14px;
  margin: 0 8px 0 -4px;
}

.bottom-tabs {
  height: 42px;
  display: flex;
  align-items: center;
  gap: 5px;
  padding-left: 4px;
  background: #f7f7f7;
  border-top: 2px dashed #8f8f8f;
}

.bottom-tabs > button {
  height: 30px;
  padding: 0 13px;
  color: #555;
  border: 2px solid transparent;
}

.bottom-tabs > button:nth-child(3) {
  margin-left: 3px;
}

.bottom-tabs > .active {
  padding: 0 10px;
  font-weight: bold;
  color: #000;
  background: #fff;
  border-color: #cacaca;
}

.pager {
  display: flex;
  align-items: center;
  align-self: stretch;
  margin-left: auto;
  padding-right: 4px;
  background: #fff;
}

.pager button {
  width: 24px;
  display: flex;
  justify-content: center;
}

/* scroll bars */
.hscroll,
.vscroll {
  display: flex;
  align-items: center;
  justify-content: space-between;
  color: #7a7a7a;
  background: #fafafa;
}

.hscroll {
  height: 21px;
  border-top: 1px solid #e6e6e6;
}

.vscroll {
  width: 20px;
  flex-direction: column;
  border-left: 1px solid #e6e6e6;
}

.thumb {
  border-radius: 6px;
  background: #bdbdbd;
}

/* objects */
.objects-body {
  flex: 1;
  display: flex;
  background: #fff;
}

.objects-list {
  flex: 1;
  min-width: 0;
  display: flex;
  flex-direction: column;
  justify-content: space-between;
}

table {
  width: 100%;
  table-layout: fixed;
  border-collapse: collapse;
}

th,
td {
  height: 37px;
  padding: 0 0 0 11px;
  text-align: left;
  font-weight: normal;
  white-space: nowrap;
  overflow: hidden;
  border-right: 1px solid #e0e0e0;
  border-bottom: 1px solid #e0e0e0;
}

th {
  height: 36px;
  background: #ececec;
}

th:nth-child(1) { width: 169px; }
th:nth-child(2) { width: 75px; }

td svg {
  display: inline-block;
  vertical-align: middle;
}

td:first-child {
  padding-left: 8px;
}

td .i14,
.sig .i14 {
  color: #8f8f8f;
}

td .net {
  margin: 0 7px 0 13px;
}

.net {
  width: 18px;
  height: 16px;
}

.objects .hscroll {
  padding: 0 4px 0 1px;
}

.objects .thumb {
  width: 262px;
  height: 13px;
}

.objects .vscroll {
  padding: 3px 0 1px;
}

/* waveform */
.wave-body {
  flex: 1;
  min-height: 0;
  display: flex;
  gap: 6px;
  background: #fff;
}

.signals {
  width: 360px;
  display: flex;
  flex-direction: column;
  border-top: 36px solid #000;
}

.signal-cols {
  flex: 1;
  display: flex;
  gap: 6px;
}

.names,
.values {
  display: flex;
  flex-direction: column;
  background: #000;
  color: #fff;
}

.names { width: 234px; }
.values { width: 120px; }

.col-head {
  height: 48px;
  line-height: 46px;
  padding-left: 23px;
  font-weight: bold;
  color: #000;
  background: linear-gradient(#f7f7f7, #dedee2);
  border: 1px solid #bbb;
}

.sig {
  height: 100px;
  display: flex;
  align-items: center;
  overflow: hidden;
  white-space: nowrap;
}

.names .sig {
  padding: 0 8px 0 12px;
  gap: 7px;
}

.sig span {
  flex: 1;
  height: 100%;
  display: flex;
  align-items: center;
  gap: 3px;
  padding-left: 1px;
  overflow: hidden;
}

.names .picked span {
  color: #000;
  background: #cbddff;
}

.sig.short {
  height: 36px;
}

.values .sig {
  padding-left: 8px;
}

.values .picked {
  margin-left: 4px;
  background: #cbddff;
  border: 2px solid #3f8fce;
  border-right: 0;
}

.foot {
  height: 61px;
  margin-top: auto;
  border-top: 1px solid #fff;
}

.plot-area {
  flex: 1;
  min-width: 0;
  display: grid;
  grid-template-columns: 1fr 21px;
  grid-template-rows: 1fr 21px;
}

.plot {
  width: 100%;
  height: 100%;
  min-height: 0;
  background: #000;
  overflow: hidden;
}

.plot path {
  fill: none;
}

.plot-area .vscroll {
  padding: 3px 0 2px;
}

.plot-area .hscroll {
  grid-column: 1 / 3;
  justify-content: flex-end;
}

.grid { stroke: #c4c4c4; }
.tick { stroke: #fff; }
.ruler { stroke: #fff; }
.dim { stroke: #006400; }
.signal { stroke: #00ff00; }

.clk {
  fill: #004d00;
  stroke: #007800;
}

.cursor {
  fill: #ffff00;
}

.label,
.cursor-label {
  font-family: "Liberation Mono", monospace;
  font-size: 17px;
  fill: #fff;
}

.cursor-label {
  fill: #000;
}

/* console */
.console-body {
  flex: 1;
  min-height: 0;
  display: flex;
  background: #fff;
  padding-right: 16px;
}

.fold-gutter {
  width: 38px;
  height: 135px;
  padding: 59px 0 0 11px;
  background: repeating-linear-gradient(#8f8f8f 0 5px, transparent 5px 11px) 18px 0 / 2px 100% no-repeat;
}

.fold-gutter svg {
  width: 16px;
  height: 18px;
}

.log-area {
  flex: 1;
  min-width: 0;
  display: flex;
  flex-direction: column;
}

.log-area pre {
  height: 135px;
  padding-top: 1px;
  font-family: "Liberation Mono", monospace;
  font-size: 15px;
  line-height: 27px;
  overflow: hidden;
}

.log-area pre span {
  color: #1a5ce6;
}

.log-area .hscroll {
  padding: 0 2px 0 1px;
}

.log-area .thumb {
  flex: 1;
  height: 12px;
  margin: 0 587px 0 9px;
}

.console .vscroll {
  height: 135px;
  padding: 2px 0;
}

.console .vscroll .thumb {
  width: 13px;
  height: 51px;
  margin-top: 32px;
}

.command {
  height: 46px;
  padding: 4px 11px 0;
  font-family: "Liberation Mono", monospace;
  font-size: 15px;
  background: #fff;
  border: solid #fff;
  border-width: 4px 5px 5px 4px;
  outline: 1px solid #b5b5b5;
  outline-offset: -5px;
}

.command::placeholder {
  color: #999;
}

/* status bar */
.statusbar {
  height: 30px;
  display: flex;
  align-items: center;
  justify-content: space-between;
  position: relative;
  padding: 0 18px 0 4px;
  background: #eee;
}

.simtime {
  height: 28px;
  line-height: 28px;
  padding: 0 4px;
  border: solid #bbb;
  border-width: 0 2px;
}

.mark {
  position: absolute;
  right: 14px;
  font-family: "Liberation Sans", "Noto Sans CJK SC", sans-serif;
  font-size: 16px;
  color: rgba(130, 130, 130, 0.6);
}

/* popup menus */
.menu {
  position: absolute;
  padding: 3px 0;
  background: #fff;
  border: 1px solid #9a9a9a;
  box-shadow: 2px 4px 6px rgba(0, 0, 0, 0.5);
}

.menu::before {
  content: "";
  position: absolute;
  top: 3px;
  bottom: 3px;
  width: 2px;
  background: #ebebeb;
}

.menu button {
  width: 100%;
  height: 39px;
  display: flex;
  align-items: center;
  position: relative;
  white-space: pre;
}

.menu button:disabled {
  color: #b3b3b3;
}

.menu hr {
  height: 2px;
  margin: 3px 0;
  border: 0;
  background: #ebebeb;
}

.menu .icon {
  position: absolute;
  width: 18px;
  height: 18px;
}

.menu kbd {
  position: absolute;
  left: 302px;
  font: inherit;
  color: #9d9d8c;
}

.menu button:disabled kbd {
  color: #c8c8c8;
}

.menu .sub::after {
  content: "";
  position: absolute;
  right: 19px;
  border: solid transparent;
  border-width: 5px 0 5px 6px;
  border-left-color: #777;
}

.menu .sub:disabled::after {
  border-left-color: #c4c4c4;
}

.menu .hover {
  background: #cbddff;
}

.menu .hover::after {
  border-left-color: #fff;
}

.context {
  left: 1383px;
  top: 474px;
  width: 418px;
}

.context::before { left: 44px; }
.context button { padding-left: 64px; }
.context hr { margin-left: 53px; }
.context .icon { left: 19px; }

.radix {
  left: 1798px;
  top: 942px;
  width: 227px;
}

.radix::before { left: 52px; }
.radix button { padding-left: 64px; }
.radix hr { margin-left: 53px; }
.radix .icon { left: 19px; }

.callout {
  position: absolute;
  border: 5px solid #ff2014;
  border-radius: 5px;
  pointer-events: none;
}

.c1 {
  left: 1201px;
  top: 478px;
  width: 204px;
  height: 56px;
}

.c2 {
  left: 1408px;
  top: 1324px;
  width: 201px;
  height: 47px;
}

.c3 {
  left: 1837px;
  top: 1319px;
  width: 170px;
  height: 48px;
}
```
